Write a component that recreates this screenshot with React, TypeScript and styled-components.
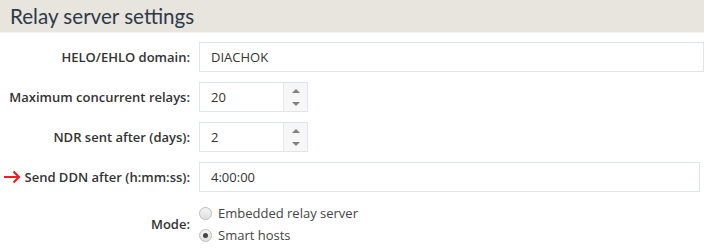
import React from "react";
import styled, { createGlobalStyle } from "styled-components";

const Global = createGlobalStyle`
  html, body { margin: 0; padding: 0; background: #fff; }
  body { font-family: "Open Sans", "Noto Sans", sans-serif; color: #333; }
`;

const Page = styled.div`
  width: 707px;
  height: 250px;
  overflow: hidden;
  background: #fff;
`;

const Header = styled.div`
  width: 704px;
  height: 32px;
  background: #e8e4de;
  box-shadow: 0 1px 1px rgba(0, 0, 0, 0.04);
  display: flex;
  align-items: center;
  padding-left: 10px;
  box-sizing: border-box;
`;

const Title = styled.h2`
  margin: 0;
  font-family: "Lato", "Open Sans", sans-serif;
  font-weight: 400;
  font-size: 20.6px;
  color: #2d3a4a;
`;

const Form = styled.div`
  display: grid;
  grid-template-columns: 190px 1fr;
  column-gap: 9px;
  row-gap: 10px;
  padding-top: 10px;
  width: 704px;
`;

const Label = styled.label`
  display: flex;
  align-items: center;
  justify-content: flex-end;
  font-family: "Open Sans", sans-serif;
  font-weight: 600;
  font-size: 13px;
  color: #333;
  white-space: nowrap;
`;

const Field = styled.div<{ $width?: string; $right?: number }>`
  width: ${(p) => p.$width ?? "auto"};
  margin-right: ${(p) => p.$right ?? 0}px;
  height: 30px;
  box-sizing: border-box;
  border: 1px solid #dfe5ec;
  display: flex;
  align-items: stretch;
  background: #fff;
`;

const Input = styled.input`
  flex: 1;
  min-width: 0;
  border: none;
  outline: none;
  padding: 0 0 0 11px;
  font-family: "Open Sans", sans-serif;
  font-size: 13px;
  color: #333;
  background: transparent;
`;

const Spin = styled.div`
  width: 23px;
  border-left: 1px solid #e3e7ec;
  background: #f7f7f7;
  display: flex;
  flex-direction: column;
  align-items: center;
  justify-content: center;
  gap: 9px;
`;

const Tri = styled.div<{ $down?: boolean }>`
  width: 0;
  height: 0;
  border-left: 4px solid transparent;
  border-right: 4px solid transparent;
  ${(p) =>
    p.$down
      ? "border-top: 4px solid #808080;"
      : "border-bottom: 4px solid #808080;"}
`;

const Radios = styled.div`
  display: flex;
  flex-direction: column;
`;

const RadioRow = styled.div`
  height: 22px;
  display: flex;
  align-items: center;
  gap: 6px;
  font-family: "Open Sans", sans-serif;
  font-size: 13px;
  color: #444;
`;

const Circle = styled.span<{ $checked?: boolean }>`
  width: 11px;
  height: 11px;
  border-radius: 50%;
  border: 1px solid #bdbdbd;
  background: linear-gradient(#f4f4f4, #e0e0e0);
  display: flex;
  align-items: center;
  justify-content: center;
  &::after {
    content: "";
    width: 5px;
    height: 5px;
    border-radius: 50%;
    background: ${(p) => (p.$checked ? "#444" : "transparent")};
  }
`;

const ArrowIcon = styled.svg`
  margin-right: auto;
  margin-left: 3px;
`;

const Arrow = () => (
  <ArrowIcon width="18" height="14" viewBox="0 0 18 14">
    <path d="M1 7 H16 M10.5 1.5 L16 7 L10.5 12.5" stroke="#e3212b" strokeWidth="2.2" fill="none" />
  </ArrowIcon>
);

const Spinner = ({ value }: { value: string }) => (
  <Field $width="109px">
    <Input defaultValue={value} />
    <Spin>
      <Tri />
      <Tri $down />
    </Spin>
  </Field>
);

export default function App() {
  return (
    <Page>
      <Global />
      <Header>
        <Title>Relay server settings</Title>
      </Header>
      <Form>
        <Label>HELO/EHLO domain:</Label>
        <Field>
          <Input defaultValue="DIACHOK" />
        </Field>
        <Label>Maximum concurrent relays:</Label>
        <Spinner value="20" />
        <Label>NDR sent after (days):</Label>
        <Spinner value="2" />
        <Label>
          <Arrow />
          Send DDN after (h:mm:ss):
        </Label>
        <Field $right={4}>
          <Input defaultValue="4:00:00" />
        </Field>
        <Label>Mode:</Label>
        <Radios>
          <RadioRow>
            <Circle />
            Embedded relay server
          </RadioRow>
          <RadioRow>
            <Circle $checked />
            Smart hosts
          </RadioRow>
        </Radios>
      </Form>
    </Page>
  );
}
